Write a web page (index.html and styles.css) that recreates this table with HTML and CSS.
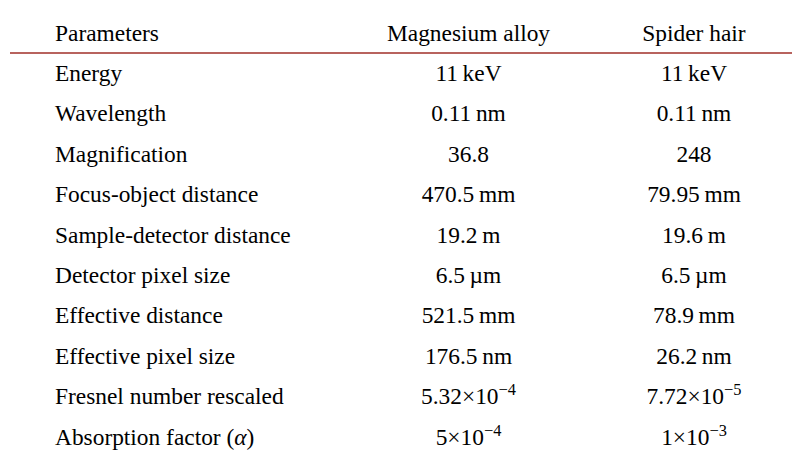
FILE: index.html
```html
<!DOCTYPE html>
<html>
<head>
<meta charset="utf-8">
<link rel="stylesheet" href="styles.css">
</head>
<body>
<div class="table">
  <div class="row head">
    <div class="c1">Parameters</div>
    <div class="c2">Magnesium alloy</div>
    <div class="c3">Spider hair</div>
  </div>
  <div class="rule"></div>
  <div class="row first">
    <div class="c1">Energy</div>
    <div class="c2">11&thinsp;keV</div>
    <div class="c3">11&thinsp;keV</div>
  </div>
  <div class="row">
    <div class="c1">Wavelength</div>
    <div class="c2">0.11&thinsp;nm</div>
    <div class="c3">0.11&thinsp;nm</div>
  </div>
  <div class="row">
    <div class="c1">Magnification</div>
    <div class="c2">36.8</div>
    <div class="c3">248</div>
  </div>
  <div class="row">
    <div class="c1">Focus-object distance</div>
    <div class="c2">470.5&thinsp;mm</div>
    <div class="c3">79.95&thinsp;mm</div>
  </div>
  <div class="row">
    <div class="c1">Sample-detector distance</div>
    <div class="c2">19.2&thinsp;m</div>
    <div class="c3">19.6&thinsp;m</div>
  </div>
  <div class="row">
    <div class="c1">Detector pixel size</div>
    <div class="c2">6.5&thinsp;µm</div>
    <div class="c3">6.5&thinsp;µm</div>
  </div>
  <div class="row">
    <div class="c1">Effective distance</div>
    <div class="c2">521.5&thinsp;mm</div>
    <div class="c3">78.9&thinsp;mm</div>
  </div>
  <div class="row">
    <div class="c1">Effective pixel size</div>
    <div class="c2">176.5&thinsp;nm</div>
    <div class="c3">26.2&thinsp;nm</div>
  </div>
  <div class="row">
    <div class="c1">Fresnel number rescaled</div>
    <div class="c2">5.32×10<sup>−4</sup></div>
    <div class="c3">7.72×10<sup>−5</sup></div>
  </div>
  <div class="row">
    <div class="c1">Absorption factor (<i>α</i>)</div>
    <div class="c2">5×10<sup>−4</sup></div>
    <div class="c3">1×10<sup>−3</sup></div>
  </div>
</div>
</body>
</html>
```

FILE: styles.css
```css
html, body {
  margin: 0;
  padding: 0;
  background: #ffffff;
}
body {
  font-family: "Liberation Serif", Tinos, "Times New Roman", Times, "Nimbus Roman", "Noto Serif", FreeSerif, "DejaVu Serif", serif;
  font-size: 23.4px;
  color: #000000;
}
.table {
  margin: 0 0 0 10px;
  width: 782px;
  padding-top: 13px;
}
.row {
  display: grid;
  grid-template-columns: 331px 255px 196px;
  line-height: 40.4px;
  height: 40.4px;
  white-space: nowrap;
}
.row.head {
  height: 40px;
  line-height: 40px;
}
.rule {
  height: 2px;
  background: #b8635e;
  margin-top: -1px;
}
.row.first {
  margin-top: -1px;
}
.c1 {
  padding-left: 45px;
}
.c2, .c3 {
  text-align: center;
}
sup {
  font-size: 0.7em;
  line-height: 0;
  vertical-align: 0.55em;
}
i {
  font-style: italic;
}
```
